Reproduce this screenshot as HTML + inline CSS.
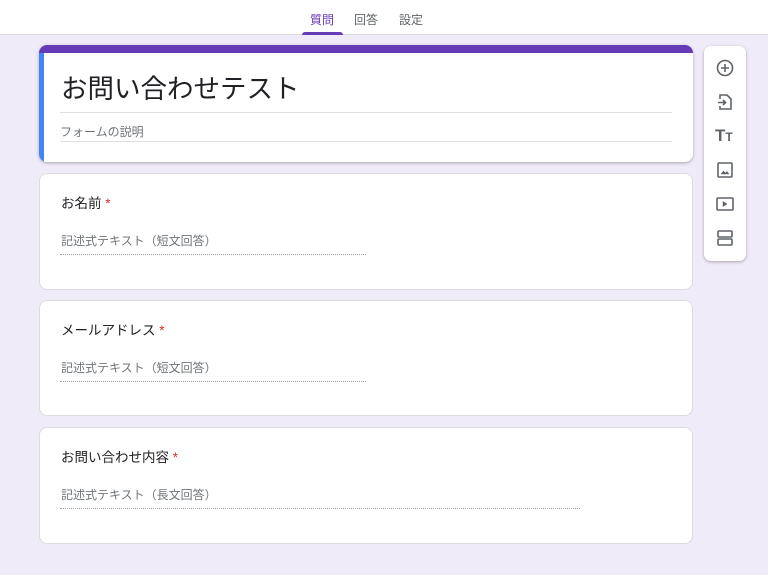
<!DOCTYPE html>
<html><head><meta charset="utf-8"><style>
*{margin:0;padding:0;box-sizing:border-box}
body{width:768px;height:575px;background:#f0ebf8;font-family:"Liberation Sans","Noto Sans CJK JP",sans-serif;position:relative;overflow:hidden;color:#202124}
.top{position:absolute;left:0;top:0;width:768px;height:35px;background:#fff;border-bottom:1px solid #dadce0}
.tab{position:absolute;top:11px;font-size:12px;color:#5f6368}
.card{position:absolute;left:39px;width:654px;background:#fff;border-radius:8px;border:1px solid #dadce0}
.lbl{position:absolute;left:21px;top:18px;font-size:13.5px;color:#202124}
.lbl b{color:#d93025;font-weight:normal}
.ph{position:absolute;left:21px;top:58px;font-size:12px;color:#70757a}
.dl{position:absolute;left:20px;top:80px;height:0;border-bottom:1px dotted #9aa0a6}
.side{position:absolute;left:704px;top:46px;width:42px;height:215px;background:#fff;border-radius:7px;box-shadow:0 1px 3px rgba(0,0,0,.3)}
.side svg{position:absolute;left:11px}
</style></head><body>
<div class="top">
<span class="tab" style="left:310px;color:#673ab7">質問</span>
<span class="tab" style="left:354px">回答</span>
<span class="tab" style="left:399px">設定</span>
<div style="position:absolute;left:302px;top:32px;width:41px;height:3px;background:#673ab7;border-radius:3px 3px 0 0"></div>
</div>
<div style="position:absolute;left:39px;top:45px;width:654px;height:117px;background:#fff;border-radius:8px;overflow:hidden;box-shadow:0 1px 3px rgba(0,0,0,.3)">
<div style="height:8px;background:#673ab7"></div>
<div style="position:absolute;left:0;top:8px;width:5px;height:109px;background:#4285f4"></div>
<div style="position:absolute;left:22px;top:22px;font-size:26.5px;color:#202124">お問い合わせテスト</div>
<div style="position:absolute;left:21px;top:67px;width:612px;border-bottom:1px solid #e0e0e0"></div>
<div style="position:absolute;left:21px;top:78px;font-size:12px;color:#70757a">フォームの説明</div>
<div style="position:absolute;left:21px;top:96px;width:612px;border-bottom:1px solid #e0e0e0"></div>
</div>
<div class="card" style="top:173px;height:117px"><div class="lbl">お名前 <b>*</b></div><div class="ph">記述式テキスト（短文回答）</div><div class="dl" style="width:306px"></div></div>
<div class="card" style="top:300px;height:116px"><div class="lbl">メールアドレス <b>*</b></div><div class="ph">記述式テキスト（短文回答）</div><div class="dl" style="width:306px"></div></div>
<div class="card" style="top:427px;height:117px"><div class="lbl">お問い合わせ内容 <b>*</b></div><div class="ph">記述式テキスト（長文回答）</div><div class="dl" style="width:520px"></div></div>
<div class="side">
<svg style="top:12px" width="20" height="20" viewBox="0 0 20 20" fill="none" stroke="#5f6368" stroke-width="1.6"><circle cx="10" cy="10" r="7.5"/><path d="M10 6v8M6 10h8"/></svg>
<svg style="top:46px" width="20" height="20" viewBox="0 0 20 20" fill="none" stroke="#5f6368" stroke-width="1.6"><path d="M5 7V3h7l4 4v10H5v-3"/><path d="M3 10.5h7M8 8l2.5 2.5L8 13"/></svg>
<div style="position:absolute;left:11px;top:80px;font-size:17px;font-weight:bold;color:#5f6368">T<span style="font-size:12px">T</span></div>
<svg style="top:114px" width="20" height="20" viewBox="0 0 20 20" fill="none" stroke="#5f6368" stroke-width="1.6"><rect x="3" y="3" width="14" height="14" rx="1"/><path d="M6 14l2.5-3 2 2 1.5-1.5 2 2.5z" fill="#5f6368" stroke-width=".5"/></svg>
<svg style="top:148px" width="20" height="20" viewBox="0 0 20 20" fill="none" stroke="#5f6368" stroke-width="1.6"><rect x="2" y="4" width="16" height="12" rx="1"/><path d="M8 7.5v5l4-2.5z" fill="#5f6368" stroke-width=".5"/></svg>
<svg style="top:182px" width="20" height="20" viewBox="0 0 20 20" fill="none" stroke="#5f6368" stroke-width="1.6"><rect x="3" y="3" width="14" height="6" rx="1"/><rect x="3" y="11" width="14" height="6" rx="1"/></svg>
</div>
</body></html>
